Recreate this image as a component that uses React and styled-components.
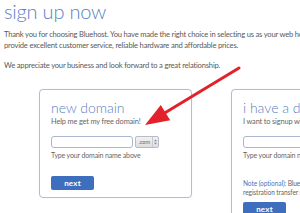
import React from 'react';
import styled, { createGlobalStyle } from 'styled-components';

const GlobalStyle = createGlobalStyle`
  html, body {
    margin: 0;
    padding: 0;
    background: #fff;
    overflow: hidden;
  }
  * { box-sizing: border-box; }
`;

// page wrapper, arrow is drawn over it
const Page = styled.div`
  position: relative;
  width: 300px;
  height: 213px;
  overflow: hidden;
  padding: 0 0 0 4px;
  font-family: Lato, "Open Sans", sans-serif;
  color: #555;
`;

const Title = styled.h1`
  margin: -1px 0 0 0;
  font-size: 20px;
  font-weight: 300;
  line-height: 24px;
  color: #5a80c5;
  letter-spacing: -0.2px;
`;

const Intro = styled.p`
  margin: ${({ $gap }) => $gap || 0}px 0 0 0;
  font-size: 7.6px;
  line-height: 11px;
  white-space: nowrap;
  letter-spacing: -0.2px;
  color: #5a5a5a;
`;

const Boxes = styled.div`
  display: flex;
  align-items: flex-start;
  gap: 39px;
  margin: 18px 0 0 35px;
`;

const Box = styled.div`
  flex: 0 0 153px;
  width: 153px;
  border: 1px solid #aebddb;
  border-radius: 4px;
  padding: 9px 0 7px 11px;
  box-shadow: 0 0 1px rgba(120, 140, 190, 0.3);
`;

const BoxTitle = styled.h2`
  margin: 0;
  font-size: 14px;
  font-weight: 300;
  line-height: 17px;
  color: #5a80c5;
  white-space: nowrap;
`;

const BoxSub = styled.div`
  margin-top: 1px;
  font-size: 7.4px;
  line-height: 10px;
  letter-spacing: -0.15px;
  color: #666;
  white-space: nowrap;
`;

const InputRow = styled.div`
  display: flex;
  align-items: center;
  gap: 2px;
  margin-top: 9px;
`;

const DomainInput = styled.div`
  width: ${({ $wide }) => ($wide ? 160 : 82)}px;
  height: 12px;
  border: 1px solid #a9b7cf;
  border-radius: 3px;
  background: #fff;
`;

const Select = styled.div`
  display: flex;
  align-items: center;
  height: 12px;
  width: 24px;
  border: 1px solid #b4bccb;
  border-radius: 2px;
  background: linear-gradient(#f2f2f2, #dedede);
  font-size: 5.5px;
  color: #666;
`;

const SelectText = styled.span`
  flex: 1;
  text-align: right;
  padding-right: 2px;
`;

const SelectArrow = styled.span`
  display: flex;
  align-items: center;
  justify-content: center;
  width: 6px;
  height: 100%;
  border-left: 1px solid #c4c9d2;
`;

const Hint = styled.div`
  margin-top: 2px;
  font-size: 7px;
  line-height: 10px;
  letter-spacing: -0.15px;
  color: #666;
  white-space: nowrap;
`;

const Note = styled.div`
  margin-top: 19px;
  font-size: 6.6px;
  line-height: 8.5px;
  letter-spacing: -0.1px;
  color: #666;
  white-space: nowrap;
`;

const NoteLabel = styled.span`
  color: #4a78c0;
`;

const Button = styled.div`
  display: flex;
  align-items: center;
  justify-content: center;
  width: 43px;
  height: 14px;
  margin-top: ${({ $gap }) => $gap}px;
  border-radius: 2px;
  background: #3d6fbe;
  color: #fff;
  font-size: 8px;
  font-weight: 700;
  letter-spacing: 0.2px;
`;

const Arrow = styled.svg`
  position: absolute;
  left: 0;
  top: 0;
  pointer-events: none;
`;

const UpDown = () => (
  <svg width="3" height="6" viewBox="0 0 3 6">
    <path d="M1.5 0.5 L3 2.3 L0 2.3 Z M1.5 5.5 L3 3.7 L0 3.7 Z" fill="#888" />
  </svg>
);

const App = () => (
  <>
    <GlobalStyle />
    <Page>
      <Title>sign up now</Title>
      <Intro $gap={6}>
        Thank you for choosing Bluehost. You have made the right choice in selecting us as your web hosting provider. We strive to
        <br />
        provide excellent customer service, reliable hardware and affordable prices.
      </Intro>
      <Intro $gap={9}>We appreciate your business and look forward to a great relationship.</Intro>

      <Boxes>
        <Box>
          <BoxTitle>new domain</BoxTitle>
          <BoxSub>Help me get my free domain!</BoxSub>
          <InputRow>
            <DomainInput />
            <Select>
              <SelectText>.com</SelectText>
              <SelectArrow>
                <UpDown />
              </SelectArrow>
            </Select>
          </InputRow>
          <Hint>Type your domain name above</Hint>
          <Button $gap={16}>next</Button>
        </Box>
        <Box>
          <BoxTitle>i have a domain</BoxTitle>
          <BoxSub>I want to signup with my domain</BoxSub>
          <InputRow>
            <DomainInput $wide />
          </InputRow>
          <Hint>Type your domain name above</Hint>
          <Note>
            <NoteLabel>Note (optional):</NoteLabel> Bluehost will help with the
            <br />
            registration transfer step
          </Note>
          <Button $gap={6}>next</Button>
        </Box>
      </Boxes>

      <Arrow width="300" height="213" viewBox="0 0 300 213">
        <line x1="239" y1="68" x2="163" y2="114" stroke="#e3212b" strokeWidth="3" strokeLinecap="round" />
        <polygon points="145,125 160.8,104.9 170.2,120.3" fill="#e3212b" />
      </Arrow>
    </Page>
  </>
);

export default App;
